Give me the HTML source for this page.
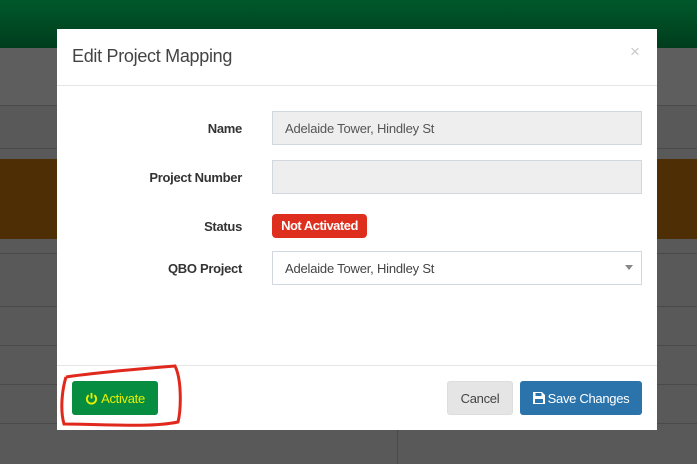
<!DOCTYPE html>
<html><head><style>
*{box-sizing:border-box;margin:0;padding:0}
body{width:697px;height:464px;overflow:hidden;background:#595959;font-family:"Liberation Sans",sans-serif;position:relative}
.abs{position:absolute}
.hl{position:absolute;left:0;width:697px;height:1px;background:#4a4a4a}
.modal{position:absolute;left:57px;top:29px;width:600px;height:401px;background:#fff}
.lbl{position:absolute;right:415px;font-size:13px;font-weight:bold;color:#333;letter-spacing:-0.3px}
.inp{position:absolute;left:215px;width:370px;height:34px;border:1px solid #d2d6de;font-size:13px;color:#555;padding:9px 12px;letter-spacing:-0.2px}
.btn{position:absolute;top:352px;height:34px;border-radius:3px;font-size:13px;letter-spacing:-0.3px;display:flex;align-items:center;justify-content:center}
</style></head><body>
<div class="abs" style="left:0;top:0;width:697px;height:48px;background:linear-gradient(#00582a,#003d1d)"></div>
<div class="abs" style="left:0;top:48px;width:697px;height:57px;background:#5e5e5e"></div>
<div class="hl" style="top:105px"></div>
<div class="hl" style="top:148px"></div>
<div class="abs" style="left:0;top:159px;width:697px;height:80px;background:#4d2e05"></div>
<div class="hl" style="top:253px"></div>
<div class="hl" style="top:306px"></div>
<div class="hl" style="top:345px"></div>
<div class="hl" style="top:384px"></div>
<div class="hl" style="top:423px"></div>
<div class="abs" style="left:397px;top:430px;width:1px;height:34px;background:#4a4a4a"></div>
<div class="modal">
 <div class="abs" style="left:15px;top:17px;font-size:18px;color:#444;letter-spacing:-0.3px">Edit Project Mapping</div>
 <div class="abs" style="left:573px;top:13px;font-size:17px;color:#c8c8c8">×</div>
 <div class="abs" style="left:0;top:56px;width:600px;height:1px;background:#e5e5e5"></div>
 <div class="lbl" style="top:92px">Name</div>
 <div class="inp" style="top:82px;background:#eee">Adelaide Tower, Hindley St</div>
 <div class="lbl" style="top:141px">Project Number</div>
 <div class="inp" style="top:131px;background:#eee"></div>
 <div class="lbl" style="top:190px">Status</div>
 <div class="abs" style="left:215px;top:185px;width:95px;height:24px;background:#dd2e1e;border-radius:4px;color:#fff;font-size:13px;font-weight:bold;text-align:center;line-height:24px;letter-spacing:-0.5px">Not Activated</div>
 <div class="lbl" style="top:232px">QBO Project</div>
 <div class="inp" style="top:222px;background:#fff;color:#444">Adelaide Tower, Hindley St<span style="position:absolute;right:8px;top:13px;border-left:4px solid transparent;border-right:4px solid transparent;border-top:5px solid #888"></span></div>
 <div class="abs" style="left:0;top:336px;width:600px;height:1px;background:#e5e5e5"></div>
 <div class="btn" style="left:15px;width:86px;background:#068d40;color:#e8f000">
  <svg width="13" height="13" viewBox="0 0 14 14" style="margin-right:3px"><path d="M4 3.5A5 5 0 1 0 10 3.5" fill="none" stroke="#e8f000" stroke-width="2"/><path d="M7 1v6" stroke="#e8f000" stroke-width="2"/></svg>Activate</div>
 <div class="btn" style="left:390px;width:66px;background:#e5e5e5;color:#444;border:1px solid #ddd">Cancel</div>
 <div class="btn" style="left:463px;width:122px;background:#2b74ab;color:#fff">
  <svg width="12" height="12" viewBox="0 0 12 12" style="margin-right:3px"><path d="M0 0h9l3 3v9H0z" fill="#fff"/><rect x="2.5" y="1" width="6" height="3" fill="#2b74ab"/><rect x="2" y="7" width="8" height="4" fill="#2b74ab"/></svg>Save Changes</div>
</div>
<svg class="abs" style="left:0;top:0" width="697" height="464"><path d="M66 377 C100 372,150 368,175 366 C182 380,181 410,178 422 C150 428,100 424,64 424 C60 410,62 390,66 377" fill="none" stroke="#e0281c" stroke-width="3"/></svg>
</body></html>
